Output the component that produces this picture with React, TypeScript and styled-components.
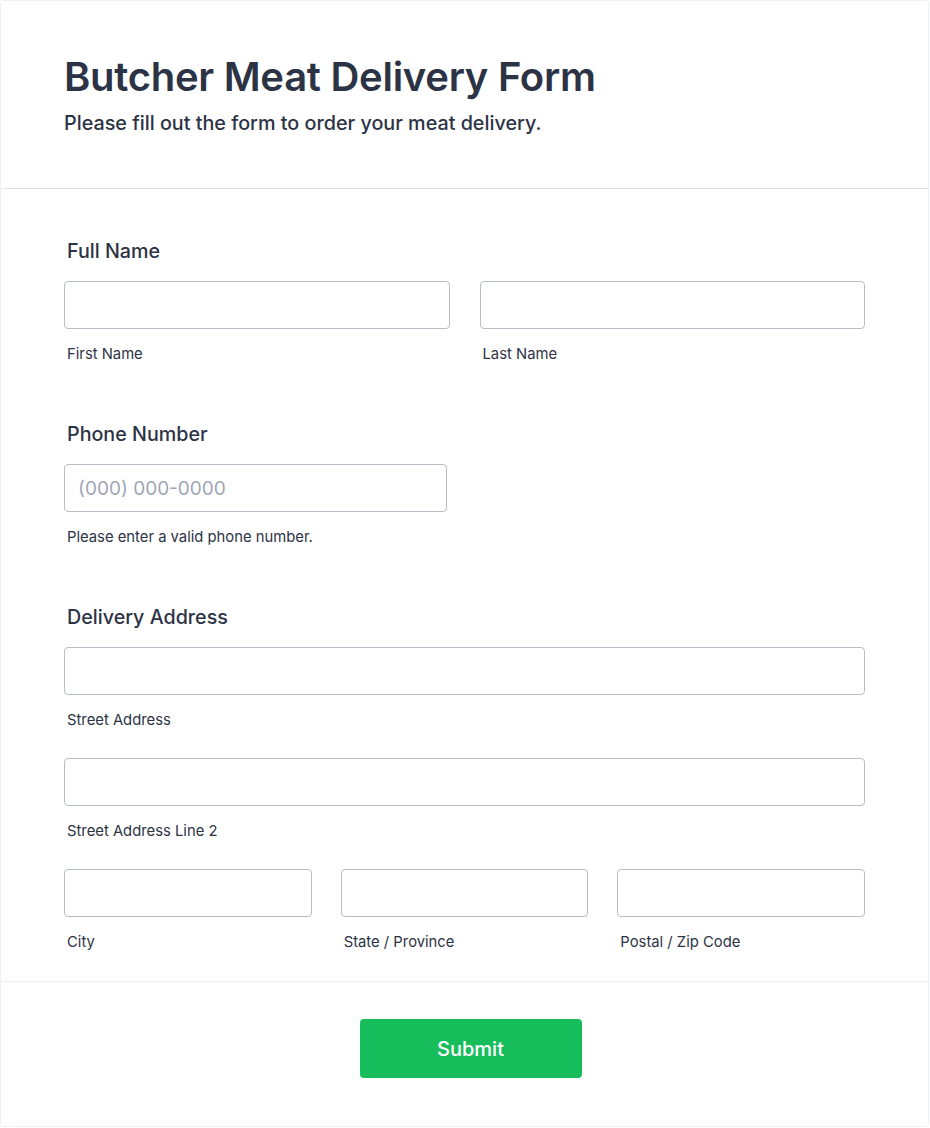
import React from "react";
import styled, { createGlobalStyle } from "styled-components";

const GlobalStyle = createGlobalStyle`
  * {
    box-sizing: border-box;
  }
  body {
    margin: 0;
    background: #ffffff;
    font-family: Inter, "Noto Sans", sans-serif;
    color: #2c3345;
  }
`;

const Card = styled.div`
  width: 929px;
  min-height: 1127px;
  background: #ffffff;
  border: 1px solid #eff0f6;
  border-radius: 3px;
`;

const Header = styled.header`
  padding: 52px 63px 51px 63px;
  border-bottom: 1px solid #dfe1ec;
`;

const Title = styled.h1`
  margin: 0;
  font-size: 40px;
  line-height: 48px;
  font-weight: 600;
  letter-spacing: -0.28px;
  color: #2c3345;
`;

const Subtitle = styled.p`
  margin: 8px 0 0;
  font-size: 19.75px;
  line-height: 28px;
  font-weight: 500;
  color: #2c3345;
`;

const FormBody = styled.form`
  padding: 50px 63px 29px 63px;
  display: flex;
  flex-direction: column;
  gap: 58px;
`;

const Field = styled.div`
  display: flex;
  flex-direction: column;
`;

const Label = styled.label`
  padding-left: 3px;
  margin-bottom: 18px;
  font-size: 19.7px;
  line-height: 24px;
  font-weight: 500;
  color: #2c3345;
`;

const Row = styled.div<{ $cols: number; $gap: number }>`
  display: grid;
  grid-template-columns: repeat(${(p) => p.$cols}, 1fr);
  column-gap: ${(p) => p.$gap}px;
`;

const Stack = styled.div`
  display: flex;
  flex-direction: column;
  gap: 28px;
`;

const Cell = styled.div<{ $width?: number }>`
  display: flex;
  flex-direction: column;
  width: ${(p) => (p.$width ? `${p.$width}px` : "auto")};
`;

const Input = styled.input`
  height: 48px;
  width: 100%;
  border: 1px solid #b8bdc9;
  border-radius: 4px;
  padding: 0 13px;
  font-family: Inter, "Noto Sans", sans-serif;
  font-size: 19px;
  color: #2c3345;
  background: #ffffff;
  outline: none;

  &::placeholder {
    color: #a0a6b5;
  }
`;

const SubLabel = styled.span`
  margin-top: 15px;
  padding-left: 3px;
  font-size: 14.8px;
  line-height: 20px;
  color: #2c3345;
`;

const Footer = styled.div`
  border-top: 1px solid #eceef5;
  padding: 37px 0 48px 12px;
  display: flex;
  justify-content: center;
`;

const SubmitButton = styled.button`
  width: 222px;
  height: 59px;
  border: none;
  border-radius: 4px;
  background: #18bd5b;
  color: #ffffff;
  font-family: Inter, "Noto Sans", sans-serif;
  font-size: 20px;
  font-weight: 500;
  cursor: pointer;
`;

function App() {
  return (
    <>
      <GlobalStyle />
      <Card>
        <Header>
          <Title>Butcher Meat Delivery Form</Title>
          <Subtitle>Please fill out the form to order your meat delivery.</Subtitle>
        </Header>

        <FormBody onSubmit={(e) => e.preventDefault()}>
          <Field>
            <Label>Full Name</Label>
            <Row $cols={2} $gap={30}>
              <Cell>
                <Input type="text" />
                <SubLabel>First Name</SubLabel>
              </Cell>
              <Cell>
                <Input type="text" />
                <SubLabel>Last Name</SubLabel>
              </Cell>
            </Row>
          </Field>

          <Field>
            <Label>Phone Number</Label>
            <Cell $width={383}>
              <Input type="tel" placeholder="(000) 000-0000" />
              <SubLabel>Please enter a valid phone number.</SubLabel>
            </Cell>
          </Field>

          <Field>
            <Label>Delivery Address</Label>
            <Stack>
              <Cell>
                <Input type="text" />
                <SubLabel>Street Address</SubLabel>
              </Cell>
              <Cell>
                <Input type="text" />
                <SubLabel>Street Address Line 2</SubLabel>
              </Cell>
              <Row $cols={3} $gap={29}>
                <Cell>
                  <Input type="text" />
                  <SubLabel>City</SubLabel>
                </Cell>
                <Cell>
                  <Input type="text" />
                  <SubLabel>State / Province</SubLabel>
                </Cell>
                <Cell>
                  <Input type="text" />
                  <SubLabel>Postal / Zip Code</SubLabel>
                </Cell>
              </Row>
            </Stack>
          </Field>
        </FormBody>

        <Footer>
          <SubmitButton type="submit">Submit</SubmitButton>
        </Footer>
      </Card>
    </>
  );
}

export default App;
